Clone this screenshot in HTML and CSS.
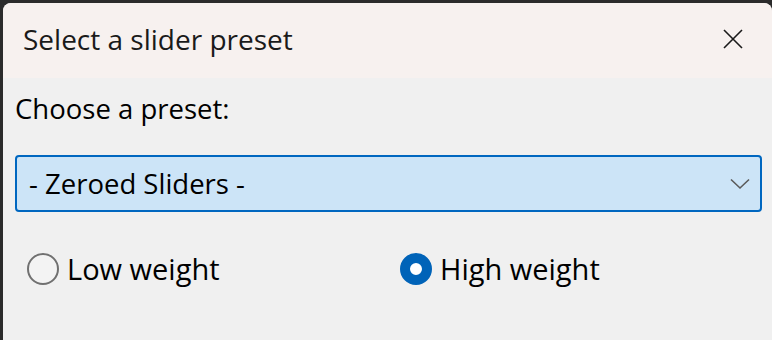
FILE: index.html
```html
<!DOCTYPE html>
<html lang="en">
<head>
  <meta charset="UTF-8" />
  <title>Select a slider preset</title>
  <link rel="stylesheet" href="styles.css">
</head>
<body>
  <div class="window">
    <div class="titlebar">
      <span class="title">Select a slider preset</span>
      <button class="close" aria-label="Close">
        <svg width="20" height="20" viewBox="0 0 20 20">
          <path d="M1 1 L19 19 M19 1 L1 19" stroke="#1a1a1a" stroke-width="1.6" fill="none"/>
        </svg>
      </button>
    </div>
    <div class="content">
      <div class="label">Choose a preset:</div>
      <div class="select">
        <span class="select-text">- Zeroed Sliders -</span>
        <svg class="chevron" width="20" height="12" viewBox="0 0 20 12">
          <path d="M1 1.5 L10 10 L19 1.5" stroke="#5a5a5a" stroke-width="1.6" fill="none"/>
        </svg>
      </div>
      <div class="radios">
        <label class="radio">
          <span class="dot"></span>
          <span>Low weight</span>
        </label>
        <label class="radio checked">
          <span class="dot"></span>
          <span>High weight</span>
        </label>
      </div>
    </div>
  </div>
</body>
</html>
```

FILE: styles.css
```css
* {
  margin: 0;
  padding: 0;
  box-sizing: border-box;
  font-family: 'Open Sans', 'Noto Sans', sans-serif;
}

body {
  width: 772px;
  height: 340px;
  background: #2b2b2b;
  overflow: hidden;
}

.window {
  margin: 3px 0 0 3px;
  width: 769px;
  height: 337px;
  background: #f0f0f0;
  border-radius: 8px 8px 0 0;
  overflow: hidden;
}

.titlebar {
  height: 75px;
  background: #f7f1ef;
  display: flex;
  align-items: center;
  justify-content: space-between;
  padding: 0 29px 4px 20px;
}

.title {
  font-size: 28px;
  color: #1a1a1a;
}

.close {
  border: none;
  background: none;
  width: 20px;
  height: 20px;
  display: flex;
}

.content {
  padding: 10px 12px 0 12px;
}

.label {
  font-size: 27.5px;
  color: #000;
  height: 42px;
  line-height: 42px;
  margin-bottom: 25px;
}

.select {
  height: 57px;
  width: 747px;
  border: 2px solid #0067c0;
  border-radius: 4px;
  background: #cce4f7;
  display: flex;
  align-items: center;
  justify-content: space-between;
  padding: 0 10px 0 12px;
}

.select-text {
  font-size: 27.5px;
  color: #000;
}

.radios {
  display: flex;
  margin-top: 37px;
  padding-left: 12px;
}

.radio {
  display: flex;
  align-items: center;
  gap: 8px;
  font-size: 29px;
  color: #000;
}

.radio:first-child {
  width: 373px;
}

.dot {
  width: 32px;
  height: 32px;
  border-radius: 50%;
  border: 2px solid #707070;
  background: #f3f3f3;
}

.radio.checked .dot {
  border: 10px solid #0063b8;
  background: #fff;
}
```
